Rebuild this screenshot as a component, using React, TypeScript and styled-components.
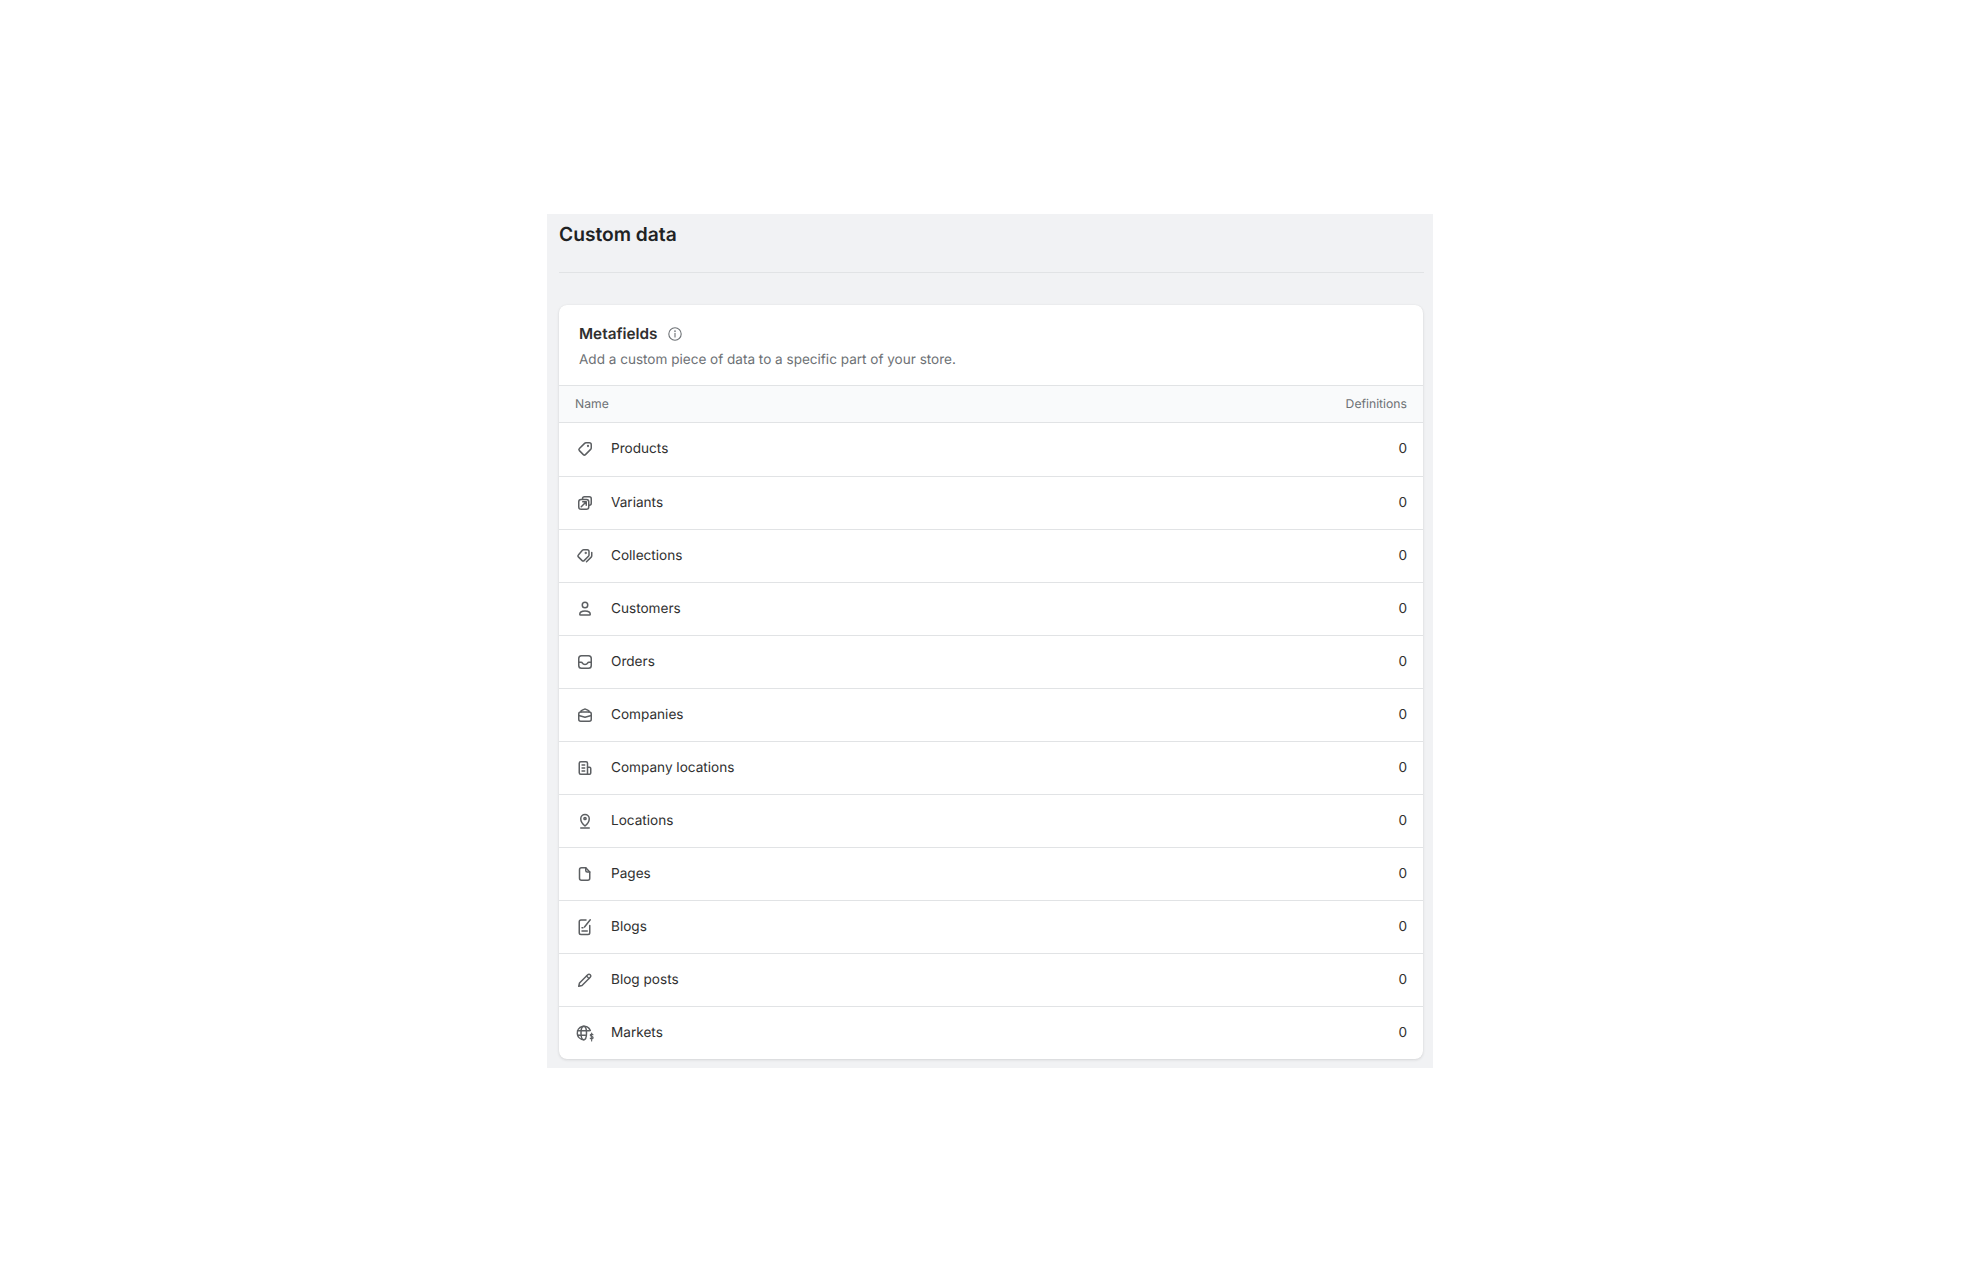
import React from 'react'
import styled, { createGlobalStyle } from 'styled-components'

const GlobalStyle = createGlobalStyle`
  html, body {
    margin: 0;
    padding: 0;
    background: #fff;
  }
  body {
    font-family: Inter, "Liberation Sans", sans-serif;
    color: #202223;
    text-rendering: geometricPrecision;
  }
`

const Page = styled.div`
  min-height: 1280px;
  box-sizing: border-box;
  padding-top: 1px;
  display: flex;
  align-items: center;
  justify-content: center;
`

const Panel = styled.main`
  width: 886px;
  box-sizing: border-box;
  padding: 0 9px 9px 12px;
  background: #f1f2f4;
`

const PageHeader = styled.header`
  height: 59px;
  box-sizing: border-box;
  padding-top: 7px;
  border-bottom: 1px solid #e1e3e5;
`

const Title = styled.h1`
  margin: 0;
  font-size: 19.2px;
  line-height: 26px;
  font-weight: 600;
  color: #202223;
`

const Card = styled.section`
  width: 864px;
  margin-top: 32px;
  background: #fff;
  border-radius: 8px;
  overflow: hidden;
  box-shadow: 0 1px 3px rgba(23, 24, 24, 0.12), 0 0 1px rgba(23, 24, 24, 0.08);
`

const CardHeader = styled.div`
  height: 80px;
  box-sizing: border-box;
  padding: 19px 20px 0;
`

const HeadingRow = styled.div`
  display: flex;
  align-items: center;
  gap: 10px;
  height: 20px;
`

const Heading = styled.h2`
  margin: 0;
  font-size: 15.3px;
  line-height: 20px;
  font-weight: 600;
  color: #303030;
`

const InfoButton = styled.span`
  display: flex;
  color: #6d7175;
`

const Description = styled.p`
  margin: 7px 0 0;
  font-size: 13.55px;
  line-height: 18px;
  color: #6d7175;
`

const ColumnHeader = styled.div`
  height: 38px;
  box-sizing: border-box;
  padding: 0 16px;
  display: flex;
  align-items: center;
  justify-content: space-between;
  background: #f9fafb;
  border-top: 1px solid #e1e3e5;
  border-bottom: 1px solid #e1e3e5;
  font-size: 12.2px;
  color: #6d7175;
`

const Row = styled.div`
  height: 53px;
  box-sizing: border-box;
  padding: 0 16px;
  display: flex;
  align-items: center;
  font-size: 13.6px;
  color: #303030;
  & + & {
    border-top: 1px solid #e1e3e5;
  }
`

const IconSlot = styled.span`
  width: 20px;
  height: 20px;
  margin-right: 16px;
  color: #5c5f62;
  display: flex;
`

const RowName = styled.span`
  flex: 1;
`

const Glyph = ({ children }: { children: React.ReactNode }) => (
  <svg
    width="20"
    height="20"
    viewBox="0 0 20 20"
    fill="none"
    stroke="currentColor"
    strokeWidth="1.5"
    strokeLinecap="round"
    strokeLinejoin="round"
  >
    {children}
  </svg>
)

const rows: { name: string; icon: React.ReactNode }[] = [
  {
    name: 'Products',
    icon: (
      <Glyph>
        <path d="M11 3.75h3.25c1.1 0 2 .9 2 2V9c0 .5-.2 1-.6 1.4l-5.2 5.2c-.6.6-1.5.6-2.1 0l-3.95-3.95c-.6-.6-.6-1.5 0-2.1l5.2-5.2c.4-.4.9-.6 1.4-.6z" />
        <circle cx="13" cy="7" r=".4" />
      </Glyph>
    ),
  },
  {
    name: 'Variants',
    icon: (
      <Glyph>
        <path d="M7.5 6V5.75a2 2 0 0 1 2-2H14.25a2 2 0 0 1 2 2v4.5a2 2 0 0 1-2 2H14" />
        <rect x="3.75" y="6.5" width="10" height="9.75" rx="2.25" />
        <path d="M6.25 13.75l5-5M7.75 8.75h3.5v3.5" />
      </Glyph>
    ),
  },
  {
    name: 'Collections',
    icon: (
      <Glyph>
        <path d="M8.75 3.75h3.5c1 0 1.75.75 1.75 1.75V9c0 .5-.2.95-.55 1.3L9.1 14.65c-.55.55-1.4.55-1.95 0L3.35 10.9c-.55-.55-.55-1.4 0-1.95L7.4 4.3c.35-.35.85-.55 1.35-.55z" />
        <path d="M16.75 6.5v3.3c0 .5-.2.95-.55 1.3L11.5 15.75" />
        <circle cx="10.75" cy="7" r=".4" />
      </Glyph>
    ),
  },
  {
    name: 'Customers',
    icon: (
      <Glyph>
        <circle cx="10" cy="6" r="2.75" />
        <path d="M4.75 15.25c0-2 1.8-3.25 5.25-3.25s5.25 1.25 5.25 3.25c0 .5-.35.75-.9.75h-8.7c-.55 0-.9-.25-.9-.75z" />
      </Glyph>
    ),
  },
  {
    name: 'Orders',
    icon: (
      <Glyph>
        <rect x="3.75" y="3.75" width="12.5" height="12.5" rx="2.75" />
        <path d="M3.75 10.25h2.4c.6 0 1 .3 1.3.9.4.8 1.3 1.35 2.55 1.35s2.15-.55 2.55-1.35c.3-.6.7-.9 1.3-.9h2.4" />
      </Glyph>
    ),
  },
  {
    name: 'Companies',
    icon: (
      <Glyph>
        <path d="M6 7V6.25c0-.4.3-.75.7-.85l2.9-1.3c.25-.1.55-.1.8 0l2.9 1.3c.4.1.7.45.7.85V7" />
        <rect x="3.75" y="7" width="12.5" height="9.25" rx="2" />
        <path d="M3.75 10.5l6.25 1.75 6.25-1.75" />
      </Glyph>
    ),
  },
  {
    name: 'Company locations',
    icon: (
      <Glyph>
        <path d="M12.5 16.25H5.75c-.8 0-1.5-.7-1.5-1.5V5.25c0-.8.7-1.5 1.5-1.5h5.25c.8 0 1.5.7 1.5 1.5z" />
        <path d="M12.5 9.25h2c.7 0 1.25.55 1.25 1.25v4.5c0 .7-.55 1.25-1.25 1.25h-2" />
        <path d="M7 7h2.75M7 10h2.75M7 13h2.75" strokeWidth="1.3" />
      </Glyph>
    ),
  },
  {
    name: 'Locations',
    icon: (
      <Glyph>
        <path d="M10 15c-2.5-2-4.25-4.5-4.25-7.25a4.25 4.25 0 0 1 8.5 0c0 2.75-1.75 5.25-4.25 7.25z" />
        <circle cx="10" cy="7.5" r="1.1" />
        <path d="M5.75 17h8.5" />
      </Glyph>
    ),
  },
  {
    name: 'Pages',
    icon: (
      <Glyph>
        <path d="M6.5 3.75h4.25l4 4.25v6.25c0 1.1-.9 2-2 2H6.5c-1.1 0-2-.9-2-2v-8.5c0-1.1.9-2 2-2z" />
        <path d="M10.75 3.75V6.5c0 .8.7 1.5 1.5 1.5h2.5" />
      </Glyph>
    ),
  },
  {
    name: 'Blogs',
    icon: (
      <Glyph>
        <path d="M11 3H6c-1 0-1.75.75-1.75 1.75v11C4.25 16.75 5 17.5 6 17.5h7c1 0 1.75-.75 1.75-1.75V8.5" />
        <path d="M9.5 10l5.75-7.25" />
        <path d="M7 14h5.25M7 10.75h1" />
      </Glyph>
    ),
  },
  {
    name: 'Blog posts',
    icon: (
      <Glyph>
        <path d="M3.75 16.25l.75-3.25 8.25-8.25c.65-.65 1.85-.65 2.5 0s.65 1.85 0 2.5L7 15.5z" />
        <path d="M11.5 6l2.5 2.5" strokeWidth="1.2" />
      </Glyph>
    ),
  },
  {
    name: 'Markets',
    icon: (
      <Glyph>
        <path d="M15.3 7.5A6.75 6.75 0 1 0 9 16.75" />
        <ellipse cx="8.75" cy="10" rx="2.75" ry="6.75" />
        <path d="M2.5 7.75h12M2.5 12.25h8" strokeWidth="1.3" />
        <path d="M18 11.75c-.3-.5-.8-.75-1.4-.75-.8 0-1.35.45-1.35 1.15 0 1.6 2.9.85 2.9 2.6 0 .7-.6 1.15-1.45 1.15-.65 0-1.2-.25-1.5-.75M16.65 10v8" strokeWidth="1.1" />
      </Glyph>
    ),
  },
]

export default function App() {
  return (
    <>
      <GlobalStyle />
      <Page>
        <Panel>
          <PageHeader>
            <Title>Custom data</Title>
          </PageHeader>
          <Card>
            <CardHeader>
              <HeadingRow>
                <Heading>Metafields</Heading>
                <InfoButton>
                  <svg width="16" height="16" viewBox="0 0 16 16" fill="none" stroke="currentColor" strokeWidth="1.1" strokeLinecap="round">
                    <circle cx="8" cy="8" r="6.2" />
                    <path d="M8 7.4v3.6" />
                    <circle cx="8" cy="5.2" r=".3" />
                  </svg>
                </InfoButton>
              </HeadingRow>
              <Description>Add a custom piece of data to a specific part of your store.</Description>
            </CardHeader>
            <ColumnHeader>
              <span>Name</span>
              <span>Definitions</span>
            </ColumnHeader>
            {rows.map((row) => (
              <Row key={row.name}>
                <IconSlot>{row.icon}</IconSlot>
                <RowName>{row.name}</RowName>
                <span>0</span>
              </Row>
            ))}
          </Card>
        </Panel>
      </Page>
    </>
  )
}
